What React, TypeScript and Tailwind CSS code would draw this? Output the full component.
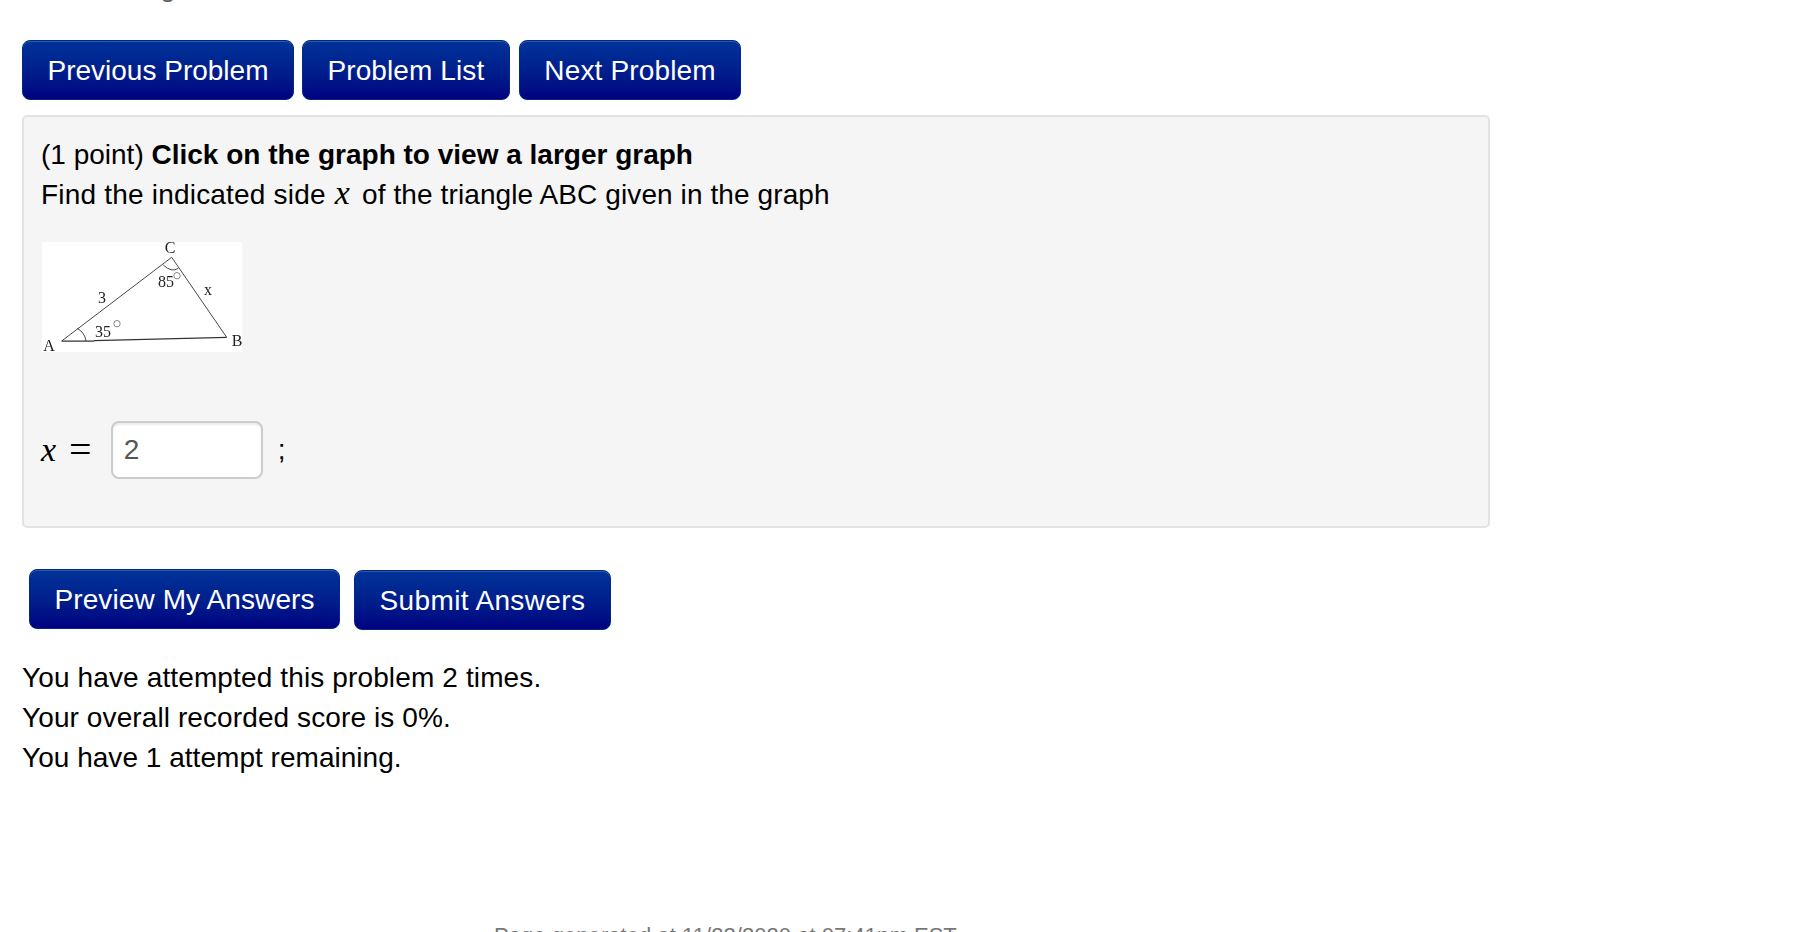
const sans = "font-['Liberation_Sans',Arial,sans-serif]";

function NavButton({ label, className = "" }: { label: string; className?: string }) {
  return (
    <button
      className={`h-[60px] rounded-lg border border-[#002a80] bg-gradient-to-b from-[#003399] to-[#000080] px-[24.5px] pt-[2px] text-[28px] leading-[40px] text-white shadow-[inset_0_1px_0_rgba(255,255,255,0.18)] ${className}`}
    >
      {label}
    </button>
  );
}

function MathX({ className = "" }: { className?: string }) {
  return <i className={`font-['Liberation_Serif',serif] text-[34px] leading-none ${className}`}>x</i>;
}

function TriangleGraph() {
  return (
    <svg width="200" height="110" viewBox="0 0 200 110" className="ml-px block bg-white blur-[0.3px]">
      <g stroke="#333" strokeWidth="0.9" fill="none">
        <path d="M19.7 99 L129.7 15.3 L184.7 95.3" />
        <path d="M19.7 99.2 L52 99.2 M52 98.6 L184.7 95.4" strokeWidth="1.2" />
        <path d="M35.3 86.3 Q43 91 44 99" />
        <path d="M121.3 23 Q129.7 31 136.3 26.3" />
      </g>
      <g stroke="#888" strokeWidth="1" fill="none">
        <circle cx="135" cy="33.7" r="3.2" />
        <circle cx="75" cy="81.7" r="3.2" />
      </g>
      <g fontFamily="'Liberation Serif',serif" fontSize="16" fill="#222" textAnchor="middle">
        <text x="128" y="11">C</text>
        <text x="60" y="61">3</text>
        <text x="124" y="45">85</text>
        <text x="166" y="53">x</text>
        <text x="61" y="95">35</text>
        <text x="7" y="109">A</text>
        <text x="195" y="104">B</text>
      </g>
    </svg>
  );
}

export default function App() {
  return (
    <div className={`h-[932px] overflow-hidden bg-white pl-[22px] text-[28px] leading-[40px] text-black ${sans}`}>
      <div className="h-1 overflow-hidden pl-[138px]">
        <p className="-mt-[33px] text-[#666]">g</p>
      </div>

      <div className="flex gap-2 pt-9">
        <NavButton label="Previous Problem" />
        <NavButton label="Problem List" className="tracking-[0.1px]" />
        <NavButton label="Next Problem" className="ml-px tracking-[0.15px]" />
      </div>

      <div className="mt-[15px] h-[413px] w-[1468px] rounded-[5px] border-2 border-[#e3e3e3] bg-[#f5f5f5] px-[17px] pt-[18px]">
        <p>
          (1 point) <b>Click on the graph to view a larger graph</b>
        </p>
        <p className="tracking-[0.2px]">
          Find the indicated side <MathX className="ml-px" />{" "}
          <span className="ml-[4px] tracking-[0.1px]">of the triangle ABC given in the graph</span>
        </p>
        <div className="mt-[27px]">
          <TriangleGraph />
        </div>
        <div className="mt-[69px] flex items-center">
          <MathX />
          <span className="ml-[13px] font-['Liberation_Serif',serif] text-[40px] leading-none">=</span>
          <input
            readOnly
            value="2"
            className="ml-[19px] h-[58px] w-[152px] rounded-lg border-2 border-[#ccc] bg-white px-[11px] text-[#555] shadow-[inset_0_2px_2px_rgba(0,0,0,0.08)]"
          />
          <span className="ml-[15px]">;</span>
        </div>
      </div>

      <div className="mt-[41px] flex items-start pl-[7px]">
        <NavButton label="Preview My Answers" className="tracking-[0.1px]" />
        <NavButton label="Submit Answers" className="ml-[14px] mt-px tracking-[0.35px]" />
      </div>

      <div className="mt-[28px]">
        <p className="tracking-[0.13px]">You have attempted this problem 2 times.</p>
        <p className="tracking-[0.1px]">Your overall recorded score is 0%.</p>
        <p className="tracking-[0.03px]">You have 1 attempt remaining.</p>
      </div>

      <p className="mt-[138px] pl-[472px] text-[22px] tracking-[0.05px] text-[#777]">Page generated at 11/22/2020 at 07:41pm EST</p>
    </div>
  );
}
